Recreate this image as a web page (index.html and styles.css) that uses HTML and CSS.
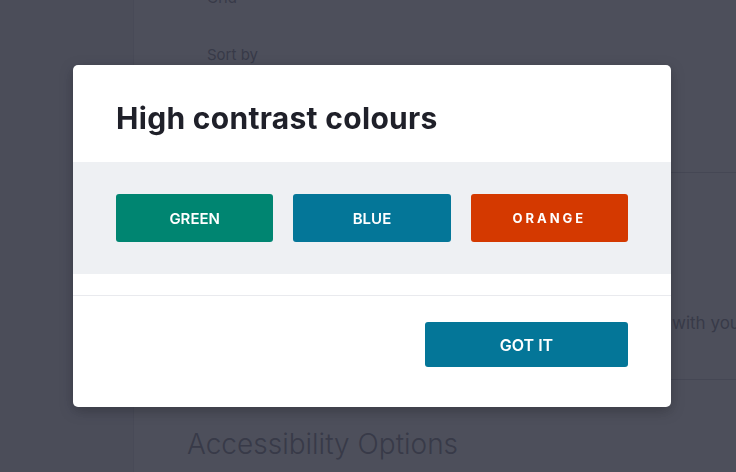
FILE: index.html
```html
<!DOCTYPE html>
<html lang="en">
<head>
<meta charset="utf-8">
<title>High contrast colours</title>
<link rel="stylesheet" href="styles.css">
</head>
<body>
<div class="page">
  <aside class="sidebar"></aside>
  <main class="main">
    <div class="field field-grid">Grid</div>
    <div class="field field-sort">Sort by</div>
    <hr class="rule rule-1">
    <p class="note">with your account settings</p>
    <hr class="rule rule-2">
    <h2 class="section-title">Accessibility Options</h2>
  </main>
</div>

<div class="overlay">
  <div class="modal" role="dialog" aria-labelledby="modal-title">
    <header class="modal-header">
      <h1 id="modal-title" class="modal-title">High contrast colours</h1>
    </header>
    <section class="modal-band">
      <button class="btn btn-green">GREEN</button>
      <button class="btn btn-blue">BLUE</button>
      <button class="btn btn-orange">ORANGE</button>
    </section>
    <div class="modal-spacer"></div>
    <footer class="modal-footer">
      <button class="btn btn-blue btn-got">GOT IT</button>
    </footer>
  </div>
</div>
</body>
</html>
```

FILE: styles.css
```css
* { box-sizing: border-box; }
html, body { margin: 0; padding: 0; }
body {
  width: 736px;
  height: 472px;
  overflow: hidden;
  background: #ffffff;
  font-family: "Inter", "Noto Sans", sans-serif;
}

/* underlying page */
.page {
  display: flex;
  height: 472px;
}
.sidebar {
  width: 134px;
  flex: 0 0 134px;
  background: #f3f3f6;
  border-right: 1px solid #e4e5ea;
}
.main {
  flex: 1;
  min-width: 0;
  overflow: hidden;
  display: flex;
  flex-direction: column;
  padding-left: 53px;
}
.field {
  font-size: 15px;
  color: #9597a2;
  padding-left: 20px;
}
.field-grid {
  margin-top: -12px;
  height: 22px;
}
.field-sort {
  margin-top: 35px;
  height: 22px;
}
.rule {
  border: 0;
  border-top: 1px solid #d4d6dd;
  margin: 0;
}
.rule-1 { margin-top: 105px; }
.note {
  margin: 140px 0 0 0;
  font-size: 17px;
  color: #9597a2;
  padding-left: 485px;
  white-space: nowrap;
  height: 22px;
}
.rule-2 { margin-top: 44px; }
.section-title {
  margin: 47px 0 0 0;
  font-size: 28px;
  font-weight: 300;
  color: #9597a2;
}

/* overlay */
.overlay {
  position: fixed;
  inset: 0;
  background: rgba(33, 35, 50, 0.8);
  padding: 65px 0 0 73px;
}
.modal {
  width: 598px;
  background: #ffffff;
  border-radius: 5px;
  overflow: hidden;
  box-shadow: 0 4px 14px rgba(0, 0, 0, 0.25);
}
.modal-header {
  padding: 34px 43px 24px;
}
.modal-title {
  margin: 0;
  font-size: 30px;
  line-height: 39px;
  font-weight: 700;
  color: #1f2029;
  letter-spacing: 0.3px;
}
.modal-band {
  background: #eef0f3;
  padding: 32px 43px 32px;
  height: 112px;
  display: grid;
  grid-template-columns: 1fr 1fr 1fr;
  column-gap: 20px;
}
.modal-spacer {
  height: 22px;
  border-bottom: 1px solid #e9eaee;
}
.modal-footer {
  display: flex;
  justify-content: flex-end;
  padding: 26px 43px 40px;
}
.btn {
  height: 48px;
  border: 0;
  border-radius: 3px;
  color: #ffffff;
  font-family: "Inter", "Noto Sans", sans-serif;
  font-size: 15px;
  font-weight: 600;
  padding: 0;
}
.btn-green { background: #008571; }
.btn-blue { background: #047698; }
.btn-orange {
  background: #d43900;
  font-size: 13px;
  font-weight: 700;
  letter-spacing: 3px;
}
.btn-got {
  width: 203px;
  height: 45px;
  font-size: 16px;
}
```
